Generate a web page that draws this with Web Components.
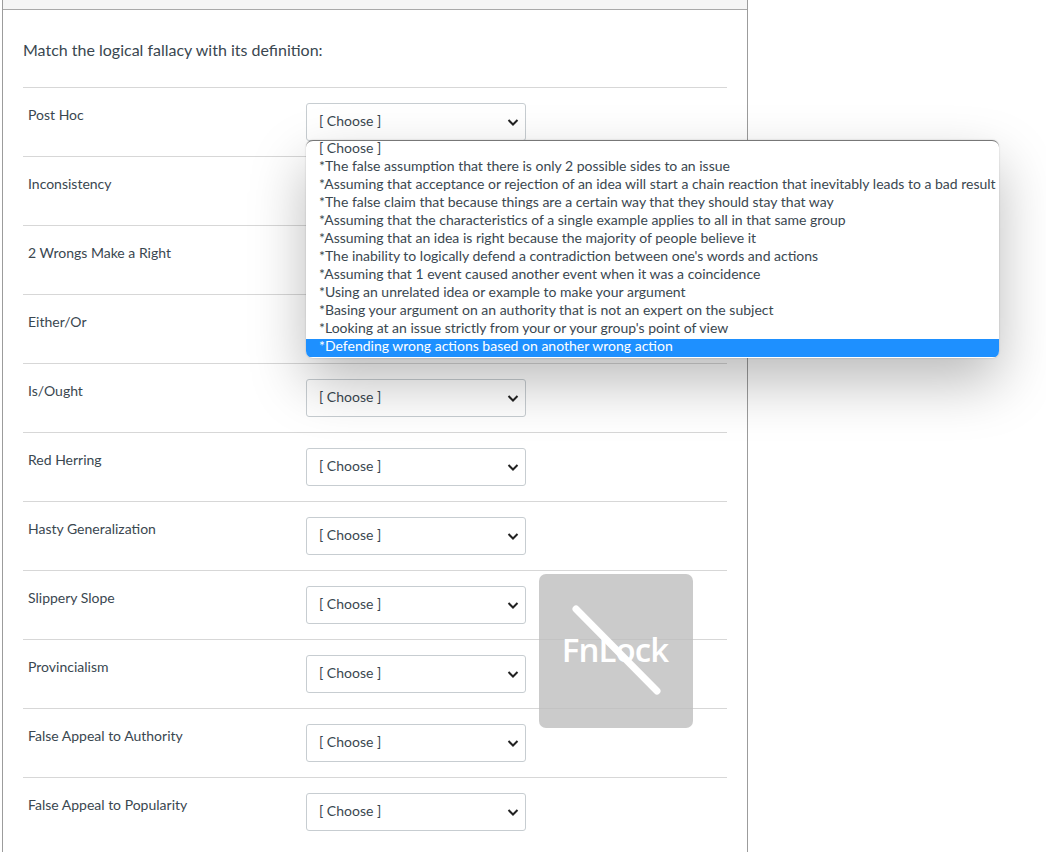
<!DOCTYPE html>
<html>
<head>
<meta charset="utf-8">
<title>Quiz question</title>
<style>
  html, body { margin: 0; height: 852px; overflow: hidden; background: #fff; }
  body { font-family: Lato, "Liberation Sans", sans-serif; color: #3a4750; }
</style>
</head>
<body>
<quiz-page>
  <quiz-card question="Match the logical fallacy with its definition:">
    <match-row>Post Hoc</match-row>
    <match-row covered>Inconsistency</match-row>
    <match-row covered>2 Wrongs Make a Right</match-row>
    <match-row covered>Either/Or</match-row>
    <match-row>Is/Ought</match-row>
    <match-row>Red Herring</match-row>
    <match-row>Hasty Generalization</match-row>
    <match-row>Slippery Slope</match-row>
    <match-row>Provincialism</match-row>
    <match-row>False Appeal to Authority</match-row>
    <match-row>False Appeal to Popularity</match-row>
  </quiz-card>
  <select-popup slot="overlay"></select-popup>
  <fn-lock slot="overlay"></fn-lock>
</quiz-page>

<script>
class QuizPage extends HTMLElement {
  constructor() {
    super();
    this.attachShadow({ mode: 'open' });
  }

  connectedCallback() {
    this.shadowRoot.innerHTML = `
      <style>
        :host { display: block; position: relative; height: 852px; overflow: hidden; }
      </style>
      <slot></slot>
      <slot name="overlay"></slot>
    `;
  }
}

class QuizCard extends HTMLElement {
  constructor() {
    super();
    this.attachShadow({ mode: 'open' });
  }

  connectedCallback() {
    this.shadowRoot.innerHTML = `
      <style>
        :host {
          display: block;
          width: 744px;
          height: 852px;
          margin-left: 2px;
          border-left: 1px solid #9c9c9c;
          border-right: 1px solid #9c9c9c;
        }
        .header {
          height: 9px;
          background: #f5f5f5;
          border-bottom: 1px solid #a9a9a9;
        }
        .question {
          padding: 28px 20px 25px;
          font-size: 16px;
          line-height: 24px;
        }
        .answers { margin: 0 20px; }
      </style>
      <div class="header"></div>
      <div class="question">${this.getAttribute('question')}</div>
      <div class="answers"><slot></slot></div>
    `;
  }
}

class MatchRow extends HTMLElement {
  constructor() {
    super();
    this.attachShadow({ mode: 'open' });
  }

  connectedCallback() {
    // rows behind the open popup only need the empty box
    const covered = this.hasAttribute('covered');
    this.shadowRoot.innerHTML = `
      <style>
        :host {
          display: grid;
          grid-template-columns: 283px 220px;
          height: 68px;
          border-top: 1px solid #d7d7d7;
          font-size: 14px;
        }
        .label { padding: 17px 0 0 5px; line-height: 20px; }
        choose-select { margin-top: 15px; }
      </style>
      <div class="label"><slot></slot></div>
      <choose-select${covered ? ' empty' : ''}></choose-select>
    `;
  }
}

class ChooseSelect extends HTMLElement {
  constructor() {
    super();
    this.attachShadow({ mode: 'open' });
  }

  connectedCallback() {
    const text = this.hasAttribute('empty') ? '' : '[ Choose ]';
    this.shadowRoot.innerHTML = `
      <style>
        :host {
          display: flex;
          align-items: center;
          justify-content: space-between;
          box-sizing: border-box;
          width: 220px;
          height: 38px;
          padding: 0 6px 0 12px;
          background: #fff;
          border: 1px solid #c7cdd1;
          border-radius: 3px;
          font-size: 14px;
        }
        span { position: relative; top: -2px; }
        svg { display: block; }
      </style>
      <span>${text}</span>
      <svg width="12" height="12" viewBox="0 0 12 12" aria-hidden="true">
        <path d="M1.5 4 6 8.5 10.5 4" fill="none" stroke="#222" stroke-width="2"/>
      </svg>
    `;
  }
}

class SelectPopup extends HTMLElement {
  constructor() {
    super();
    this.attachShadow({ mode: 'open' });
  }

  connectedCallback() {
    const options = [
      '[ Choose ]',
      '*The false assumption that there is only 2 possible sides to an issue',
      '*Assuming that acceptance or rejection of an idea will start a chain reaction that inevitably leads to a bad result',
      '*The false claim that because things are a certain way that they should stay that way',
      '*Assuming that the characteristics of a single example applies to all in that same group',
      '*Assuming that an idea is right because the majority of people believe it',
      "*The inability to logically defend a contradiction between one's words and actions",
      '*Assuming that 1 event caused another event when it was a coincidence',
      '*Using an unrelated idea or example to make your argument',
      '*Basing your argument on an authority that is not an expert on the subject',
      "*Looking at an issue strictly from your or your group's point of view",
      '*Defending wrong actions based on another wrong action'
    ];

    this.shadowRoot.innerHTML = `
      <style>
        :host {
          display: block;
          position: absolute;
          left: 306px;
          top: 140px;
          width: 693px;
          box-sizing: border-box;
          padding-bottom: 1px;
          background: #fff;
          border-top: 1px solid #777;
          border-radius: 7px;
          overflow: hidden;
          box-shadow: 0 0 2px rgba(0, 0, 0, .2), 0 24px 56px rgba(0, 0, 0, .27);
          font-size: 14px;
        }
        .option { padding-left: 13px; height: 18px; line-height: 14px; white-space: nowrap; }
        .option.active { background: #1e90ff; color: #fff; }
      </style>
      ${options.map((option, i) =>
        `<div class="option${i === options.length - 1 ? ' active' : ''}">${option}</div>`
      ).join('')}
    `;
  }
}

class FnLock extends HTMLElement {
  constructor() {
    super();
    this.attachShadow({ mode: 'open' });
  }

  connectedCallback() {
    this.shadowRoot.innerHTML = `
      <style>
        :host {
          display: flex;
          align-items: center;
          justify-content: center;
          position: absolute;
          left: 539px;
          top: 574px;
          width: 154px;
          height: 154px;
          background: rgba(190, 190, 190, .8);
          border-radius: 7px;
          color: #fff;
          font: 600 33px/1 "Open Sans", sans-serif;
        }
        span { position: relative; top: -2px; left: -1px; letter-spacing: -.9px; }
        svg { position: absolute; left: 0; top: 0; }
      </style>
      <span>FnLock</span>
      <svg width="154" height="154" viewBox="0 0 154 154" aria-hidden="true">
        <path d="M37 35 118 117" stroke="#fff" stroke-width="7" stroke-linecap="round"/>
      </svg>
    `;
  }
}

customElements.define('quiz-page', QuizPage);
customElements.define('quiz-card', QuizCard);
customElements.define('choose-select', ChooseSelect);
customElements.define('match-row', MatchRow);
customElements.define('select-popup', SelectPopup);
customElements.define('fn-lock', FnLock);
</script>
</body>
</html>
